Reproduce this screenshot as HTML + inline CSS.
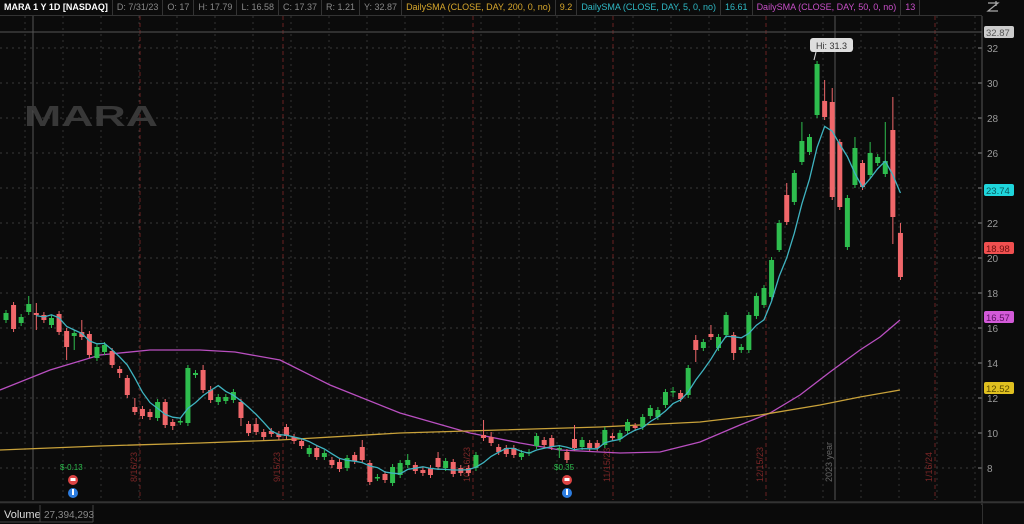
<!DOCTYPE html>
<html><head><meta charset="utf-8"><style>
html,body{margin:0;padding:0;background:#0b0b0b;width:1024px;height:524px;overflow:hidden;font-family:"Liberation Sans",sans-serif}
#hdr{position:absolute;left:0;top:0;height:15px;width:982px;display:flex;font-size:9px;line-height:15px;white-space:nowrap;background:#0b0b0b}
#hdr span{padding:0 4px;border-right:1px solid #333}
svg{position:absolute;left:0;top:0}
</style></head><body>
<svg id="c" width="1024" height="524" xmlns="http://www.w3.org/2000/svg"></svg>
<div id="hdr">
<span style="color:#fff;font-weight:bold">MARA 1 Y 1D [NASDAQ]</span>
<span style="color:#888">D: 7/31/23</span><span style="color:#888">O: 17</span><span style="color:#888">H: 17.79</span><span style="color:#888">L: 16.58</span><span style="color:#888">C: 17.37</span><span style="color:#888">R: 1.21</span><span style="color:#888">Y: 32.87</span>
<span style="color:#d7a72c">DailySMA (CLOSE, DAY, 200, 0, no)</span><span style="color:#d7a72c">9.2</span>
<span style="color:#2fb8c4">DailySMA (CLOSE, DAY, 5, 0, no)</span><span style="color:#2fb8c4">16.61</span>
<span style="color:#c84fc8">DailySMA (CLOSE, DAY, 50, 0, no)</span><span style="color:#c84fc8">13</span>
</div>
<script>
var s=document.getElementById('c'),h='';
function yP(p){return 48+(32-p)*17.5}
h+='<rect x="0" y="0" width="1024" height="524" fill="#0b0b0b"/>';
for(var p=8;p<=32;p+=2){var y=yP(p);h+='<line x1="0" x2="982" y1="'+y+'" y2="'+y+'" stroke="#3a3a3a" stroke-dasharray="2,4"/>';
h+='<line x1="978" x2="982" y1="'+y+'" y2="'+y+'" stroke="#888"/>';
h+='<text x="987" y="'+(y+4)+'" fill="#9a9a9a" font-size="10">'+p+'</text>';}
for(var x=25;x<982;x+=38){h+='<line x1="'+x+'" x2="'+x+'" y1="16" y2="500" stroke="#333" stroke-dasharray="2,4"/>';}
h+='<line x1="33" x2="33" y1="16" y2="500" stroke="#555"/>';
h+='<line x1="835" x2="835" y1="16" y2="500" stroke="#555"/>';
[140,283,473,613,766,935].forEach(function(x){h+='<line x1="'+x+'" x2="'+x+'" y1="16" y2="500" stroke="#6a2020" stroke-dasharray="4,3"/>';});
h+='<line x1="0" x2="982" y1="32" y2="32" stroke="#555"/>';
h+='<line x1="982" x2="982" y1="16" y2="524" stroke="#555"/>';
h+='<line x1="0" x2="982" y1="15.5" y2="15.5" stroke="#333"/>';
[[140,'8/16/23'],[283,'9/15/23'],[473,'10/16/23'],[613,'11/15/23'],[766,'12/15/23'],[935,'1/16/24']].forEach(function(d){h+='<text transform="translate('+(d[0]-3)+',482) rotate(-90)" fill="#7a2626" font-size="9">'+d[1]+'</text>';});
h+='<text transform="translate(832,482) rotate(-90)" fill="#666" font-size="9">2023 year</text>';
h+='<text x="24" y="126" fill="#383838" font-size="29" font-weight="bold" textLength="134" lengthAdjust="spacingAndGlyphs">MARA</text>';
function pl(pts,c){h+='<polyline fill="none" stroke="'+c+'" stroke-width="1.3" points="'+pts.map(function(a){return a.join(',')}).join(' ')+'"/>';}
pl([[0,390],[50,370],[100,355],[150,350],[200,350],[235,352],[280,360],[330,385],[400,413],[470,433],[520,443],[560,450],[620,453],[660,452],[700,442],[740,425],[770,413],[800,395],[830,372],[860,350],[880,337],[900,320]],'#b94fc0');
pl([[0,450],[100,446],[200,443],[280,440],[400,433],[500,430],[600,427],[700,422],[760,415],[820,405],[860,397],[900,390]],'#c9a23a');
var C=[[320,313],[305,329],[323,317],[312,304,296],[313,315,303,330],[315,320],[325,318],[314,332],[331,347,0,360],[336,333,0,350],[332,337,320],[334,355],[358,347],[352,345],[351,365],[369,373,0,378],[378,395],[407,412,398],[409,416],[412,417],[418,402],[402,425],[422,426,0,430],[422,421],[423,368],[375,373],[370,390,365],[390,400,386],[402,397],[401,397],[400,392],[402,418,0,426],[424,433],[424,432,418],[432,437],[431,434],[434,437],[427,436],[437,441],[441,446],[454,448],[448,457],[457,453],[460,465],[462,469],[468,458],[455,461],[447,460,440],[463,482],[478,477],[474,480],[483,467],[475,463],[465,460,454],[465,471],[470,473],[468,475],[458,467,452],[468,461],[462,474],[468,473],[468,473],[468,455],[435,438,420],[437,443,432],[447,452],[448,454],[448,455],[457,453],[453,452],[446,436],[440,445],[438,447],[449,448,0,458],[452,460],[439,448,425],[447,440],[443,448],[443,448],[445,430],[436,438],[439,433],[431,422],[426,428],[427,417],[416,408],[417,410],[405,392],[392,391,387,397],[393,399],[395,368],[340,350,335,362],[348,342],[334,337,325],[348,337],[335,315],[335,353,0,360],[350,347],[350,315],[316,296],[305,288],[297,260],[250,223,0,252],[195,222,183],[202,173],[162,141,122],[152,137],[115,64],[101,117,80],[102,197,88],[142,207],[247,198],[185,148,137],[163,187],[175,153,142],[163,157],[174,161,122],[130,217,97,244],[233,277,223]];
var cy=[];
C.forEach(function(c,i){var x=6+i*7.58,o=c[0],cl=c[1];var t=Math.min(o,cl),b=Math.max(o,cl);var hi=c[2]||t-3,lo=c[3]||b+3;var g=cl<o;var col=g?'#2ebd4e':'#f0676a';
h+='<line x1="'+x+'" x2="'+x+'" y1="'+hi+'" y2="'+lo+'" stroke="'+col+'"/>';
h+='<rect x="'+(x-2.5)+'" y="'+t+'" width="5" height="'+Math.max(b-t,1.5)+'" fill="'+col+'"/>';cy.push(cl);});
var s5=[];for(var i=4;i<cy.length;i++){var a=(cy[i]+cy[i-1]+cy[i-2]+cy[i-3]+cy[i-4])/5;s5.push([6+i*7.58,a]);}
pl(s5,'#3fb3c0');
h+='<rect x="810" y="38" width="43" height="14" rx="3" fill="#ddd"/><text x="816" y="49" fill="#333" font-size="9">Hi: 31.3</text><line x1="816" y1="52" x2="814" y2="60" stroke="#ddd"/>';
function em(x,t){h+='<text x="'+(x-13)+'" y="470" fill="#2ebd4e" font-size="8">'+t+'</text><circle cx="'+x+'" cy="480" r="5" fill="#d44"/><rect x="'+(x-2.5)+'" y="478" width="5" height="3" fill="#fff"/><circle cx="'+x+'" cy="493" r="5" fill="#2d7de0"/><rect x="'+(x-1)+'" y="489" width="2" height="6" fill="#fff"/>';}
em(73,'$-0.13');em(567,'$0.35');
function lb(y,t,bg,fg){h+='<rect x="984" y="'+(y-6)+'" width="30" height="12" rx="2" fill="'+bg+'"/><text x="986" y="'+(y+4)+'" fill="'+fg+'" font-size="9.5">'+t+'</text>';}
lb(32,'32.87','#ccc','#555');lb(190,'23.74','#1fd6dc','#0a5a5e');lb(248,'18.98','#f05050','#6a1010');lb(317,'16.57','#d35ad8','#5a1060');lb(388,'12.52','#e0c020','#5a4a00');
h+='<path d="M988 3 L998 3 L988 11 L998 11 M996 6 L996 1" stroke="#aaa" fill="none" stroke-width="1.2"/>';
h+='<line x1="0" x2="1024" y1="502" y2="502" stroke="#444"/><line x1="0" x2="1024" y1="503" y2="503" stroke="#222"/>';
h+='<rect x="0" y="505" width="982" height="19" fill="#0a0a0a"/>';
h+='<text x="4" y="518" fill="#ddd" font-size="11">Volume</text><line x1="40" x2="40" y1="505" y2="522" stroke="#444"/><line x1="93" x2="93" y1="505" y2="522" stroke="#444"/><line x1="0" x2="93" y1="522" y2="522" stroke="#444"/>';
h+='<text x="44" y="518" fill="#888" font-size="10">27,394,293</text>';
s.innerHTML=h;
</script>
</body></html>
